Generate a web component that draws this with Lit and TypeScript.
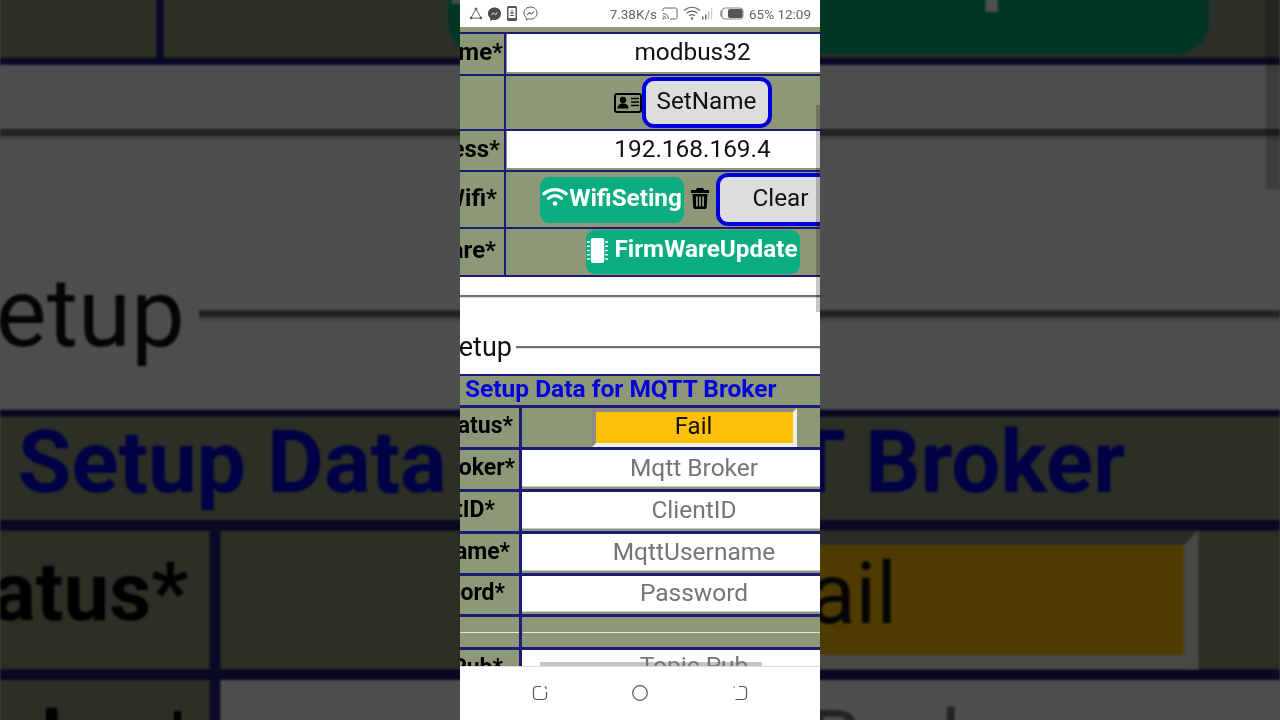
import { LitElement, html, css, svg } from "lit";
import { customElement } from "lit/decorators.js";

const cardIcon = svg`<svg class="card" viewBox="0 0 28 20"><rect x="1" y="1" width="26" height="18" rx="2" fill="none" stroke="#000" stroke-width="2"/><circle cx="9" cy="7" r="3.2"/><path d="M3.5 15.5c0-3.4 2.2-5 5.5-5s5.500 1.600 5.500 5z"/><path d="M17 5.500h8M17 9h8M17 12.500h8" stroke="#000" stroke-width="1.700"/></svg>`;
const wifiIcon = svg`<svg class="wifi" viewBox="0 0 28 20"><g fill="none" stroke="#fff" stroke-width="3.400" stroke-linecap="round"><path d="M2 6.500c7-6 17-6 24 0"/><path d="M7 11.500c4.400-3.600 9.600-3.600 14 0"/></g><circle cx="14" cy="17" r="2.500" fill="#fff"/></svg>`;
const trashIcon = svg`<svg class="trash" viewBox="0 0 18 21"><path d="M6 0h6l1.200 2H18v3H0V2h4.800z"/><path fill-rule="evenodd" d="M1.500 6h15l-.8 13.200c0 1-.8 1.800-1.800 1.800H4.100c-1 0-1.800-.8-1.800-1.800zM5 8.500v10h1.800v-10zM8.100 8.500v10h1.800v-10zM11.200 8.500v10H13v-10z"/></svg>`;
const chipIcon = svg`<svg class="chip" viewBox="0 0 22 26"><rect x="4" y="0" width="14" height="26" rx="2" fill="#fff"/><path d="M0 4h3M0 8.500h3M0 13h3M0 17.500h3M0 22h3M19 4h3M19 8.500h3M19 13h3M19 17.500h3M19 22h3" stroke="#fff" stroke-width="1.500"/></svg>`;

@customElement("app-root")
export class AppRoot extends LitElement {
  static styles = css`
    :host {
      display: block;
      position: relative;
      width: 1280px;
      height: 720px;
      overflow: hidden;
      background: #4e4e4e;
      font-family: Roboto, "Liberation Sans", sans-serif;
    }
    .backdrop {
      position: absolute;
      left: 0;
      top: -824px;
      width: 360px;
      transform: scale(3.5556);
      transform-origin: 0 0;
      filter: brightness(0.306) blur(0.35px);
    }
    .phone {
      position: relative;
      width: 360px;
      height: 720px;
      margin: 0 auto;
      display: flex;
      flex-direction: column;
      background: #fff;
    }
    .status {
      height: 27px;
      flex: none;
      display: flex;
      align-items: center;
      justify-content: space-between;
      padding: 0 9px 0 10px;
      font-size: 13.500px;
      color: #666;
      background: #fff;
      filter: blur(0.3px);
    }
    .status-left, .status-right { display: flex; align-items: center; }
    .status-left { gap: 6px; }
    .status-right { gap: 5px; }
    .status svg { display: block; }
    .viewport {
      position: relative;
      width: 360px;
      height: 639px;
      flex: none;
      overflow: hidden;
      background: #8d9879;
      filter: blur(0.3px);
    }
    .screen-wrap { position: relative; width: 360px; height: 639px; overflow: hidden; background: #8d9879; }
    .top-pad { height: 5px; }
    .row { display: flex; border-top: 2px solid #1e1a78; box-sizing: border-box; }
    .t2 .row { border-top-width: 3px; }
    .h42 { height: 42px; } .h41 { height: 41px; } .h55 { height: 55px; }
    .h57 { height: 57px; } .h48 { height: 48px; } .h33 { height: 33px; }
    .label {
      display: flex;
      justify-content: flex-end;
      align-items: center;
      overflow: hidden;
      white-space: nowrap;
      flex: none;
      font-weight: 700;
      color: #000;
      box-sizing: border-box;
      padding-bottom: 4px;
    }
    .t1 .label { width: 44px; font-size: 24px; }
    .t2 .label { width: 59px; font-size: 23px; padding-bottom: 5px; }
    .t1 .label.pr1 { padding-right: 1px; }
    .t1 .label.pr4 { padding-right: 4px; }
    .t1 .label.pr7 { padding-right: 7px; }
    .t1 .label.pr8 { padding-right: 8px; }
    .t2 .label.pr4 { padding-right: 4px; }
    .t2 .label.pr6 { padding-right: 6px; }
    .t2 .label.pr9 { padding-right: 9px; }
    .t2 .label.pr14 { padding-right: 14px; }
    .t2 .label.pr16 { padding-right: 16px; }
    .t2 .label.pr24 { padding-right: 24px; }
    .value {
      flex: none;
      display: flex;
      align-items: center;
      justify-content: center;
      border-left: 2px solid #1e1a78;
      box-sizing: border-box;
    }
    .t1 .value { width: 375px; }
    .t2 .value { width: 348px; border-left-width: 3px; }
    .field {
      flex: 1;
      align-self: stretch;
      margin: 0 1px 2px;
      background: #fff;
      display: flex;
      align-items: center;
      justify-content: center;
      font-size: 24.400px;
      color: #111;
      position: relative;
    }
    .t1 .field { padding-bottom: 3px; }
    .t2 .field { border-bottom: 1px solid #c8c8c8; color: #757575; font-size: 24.500px; margin-left: 0; padding-bottom: 2px; }
    .card { width: 28px; height: 20px; flex: none; }
    .gray-btn {
      box-sizing: border-box;
      border: 4px solid #0000dd;
      border-radius: 12px;
      background: #dddddf;
      display: flex;
      align-items: center;
      justify-content: center;
      font-size: 24.300px;
      color: #111;
      flex: none;
      padding-bottom: 4px;
    }
    .setname { width: 130px; height: 51px; }
    .clear { width: 129px; height: 53px; }
    .green-btn {
      box-sizing: border-box;
      background: #0bad80;
      border-radius: 9px;
      display: flex;
      align-items: center;
      justify-content: center;
      font-size: 24.300px;
      font-weight: 700;
      color: #fff;
      flex: none;
      padding-bottom: 4px;
    }
    .wifi-btn { width: 144px; height: 46px; gap: 1px; }
    .fw-btn { width: 214px; height: 44px; gap: 6px; padding-bottom: 7px; }
    .wifi { width: 26px; height: 20px; flex: none; margin-bottom: 2px; }
    .chip { width: 21px; height: 25px; flex: none; margin-top: 4px; }
    .trash { width: 18px; height: 21px; flex: none; margin: 0 7px 3px; }
    .section {
      background: #fff;
      height: 97px;
      box-sizing: border-box;
      padding-top: 18px;
    }
    .hr { height: 2px; background: #707070; border-bottom: 1px solid #ddd; }
    .legend { display: flex; align-items: center; height: 40px; margin-top: 29px; }
    .legend-title {
      width: 52px;
      flex: none;
      display: flex;
      justify-content: flex-end;
      overflow: hidden;
      font-size: 27px;
      color: #111;
    }
    .legend-line { flex: 1; margin-left: 4px; height: 2px; background: #707070; border-bottom: 1px solid #ddd; }
    .header {
      height: 31px;
      box-sizing: border-box;
      border-top: 2px solid #1e1a78;
      padding: 0 0 4px 5px;
      display: flex;
      align-items: center;
      font-size: 24.500px;
      font-weight: 700;
      color: #0000e0;
      white-space: nowrap;
    }
    .fail {
      box-sizing: border-box;
      width: 205px;
      height: 39px;
      border-style: solid;
      border-width: 4px;
      border-color: #8c8c84 #f0efe6 #f0efe6 #8c8c84;
      background: #ffc107;
      display: flex;
      align-items: center;
      justify-content: center;
      font-size: 24px;
      color: #111;
      padding: 0 2px 3px 0;
    }
    .rule { height: 1px; flex: 1; background: #e6e8dc; margin-left: 1px; }
    .label.plain { padding: 0; }
    .label .rule { margin: 0; }
    .hbar {
      position: absolute;
      left: 18px;
      top: 12px;
      width: 222px;
      height: 6px;
      background: #c4c4c4;
    }
    .field .topic { position: relative; padding-bottom: 3px; }
    .scrollbar {
      position: absolute;
      right: 0;
      top: 78px;
      width: 4px;
      height: 207px;
      background: rgba(0, 0, 0, 0.22);
    }
    .nav {
      flex: 1;
      display: grid;
      grid-template-columns: repeat(3, 100px);
      justify-content: center;
      align-items: center;
      border-top: 1px solid #ddd;
      background: #fff;
      filter: blur(0.3px);
      padding-bottom: 2px;
    }
    .nav svg { width: 18px; height: 18px; justify-self: center; }
  `;

  private screen() {
    return html`<div class="screen-wrap">
      <div class="top-pad"></div>
      <div class="t1">
        <div class="row h42">
          <div class="label pr1">Name*</div>
          <div class="value"><div class="field">modbus32</div></div>
        </div>
        <div class="row h55">
          <div class="label"></div>
          <div class="value">${cardIcon}<div class="gray-btn setname">SetName</div></div>
        </div>
        <div class="row h41">
          <div class="label pr4">Address*</div>
          <div class="value"><div class="field">192.168.169.4</div></div>
        </div>
        <div class="row h57">
          <div class="label pr7">Wifi*</div>
          <div class="value">
            <div class="green-btn wifi-btn">${wifiIcon}WifiSeting</div>
            ${trashIcon}
            <div class="gray-btn clear">Clear</div>
          </div>
        </div>
        <div class="row h48">
          <div class="label pr8">Firmware*</div>
          <div class="value"><div class="green-btn fw-btn">${chipIcon}FirmWareUpdate</div></div>
        </div>
      </div>
      <div class="row"></div>
      <div class="section">
        <div class="hr"></div>
        <div class="legend">
          <div class="legend-title">Setup</div>
          <div class="legend-line"></div>
        </div>
      </div>
      <div class="header">Setup Data for MQTT Broker</div>
      <div class="t2">
        <div class="row h42">
          <div class="label pr6">Status*</div>
          <div class="value"><div class="fail">Fail</div></div>
        </div>
        <div class="row h42">
          <div class="label pr4">Broker*</div>
          <div class="value"><div class="field">Mqtt Broker</div></div>
        </div>
        <div class="row h42">
          <div class="label pr24">ClientID*</div>
          <div class="value"><div class="field">ClientID</div></div>
        </div>
        <div class="row h42">
          <div class="label pr9">Username*</div>
          <div class="value"><div class="field">MqttUsername</div></div>
        </div>
        <div class="row h41">
          <div class="label pr14">Password*</div>
          <div class="value"><div class="field">Password</div></div>
        </div>
        <div class="row h33">
          <div class="label plain"><div class="rule"></div></div>
          <div class="value"><div class="rule"></div></div>
        </div>
        <div class="row h42">
          <div class="label pr16">Topic Pub*</div>
          <div class="value"><div class="field"><div class="hbar"></div><span class="topic">Topic Pub</span></div></div>
        </div>
      </div>
      <div class="scrollbar"></div>
    </div>`;
  }

  render() {
    return html`
      <div class="backdrop">${this.screen()}</div>
      <div class="phone">
        <div class="status">
          <div class="status-left">
            <svg width="12" height="13" viewBox="0 0 13 13" fill="none" stroke="#555" stroke-width="1"><path d="M6.500 1.500 12 11.500H1z"/><circle cx="6.500" cy="1.500" r="1" fill="#555"/><circle cx="1" cy="11.500" r="1" fill="#555"/><circle cx="12" cy="11.500" r="1" fill="#555"/></svg>
            <svg width="13" height="14" viewBox="0 0 13 14"><path d="M6.500.5C3 .5 0 3 0 6.500c0 2 1 3.700 2.300 4.800V14l2.400-1.300c.6.200 1.200.3 1.800.3 3.500 0 6.500-2.700 6.500-6.500S10 .5 6.500.5z" fill="#4a4a4a"/><path d="M2.800 8.500l2.500-3 2 1.500 2.900-2.500-2.300 3.500-2-1.500z" fill="#fff"/></svg>
            <svg width="10" height="15" viewBox="0 0 10 15"><rect width="10" height="15" rx="1.500" fill="#555"/><rect x="1.500" y="2" width="7" height="10" fill="#fff"/><path d="M5 3.500v4M3.200 6 5 8l1.800-2M3 9.500h4" stroke="#555" stroke-width="1" fill="none"/></svg>
            <svg width="15" height="15" viewBox="0 0 15 15" fill="none" stroke="#555" stroke-width="1"><path d="M7.500 1C3.800 1 1 3.700 1 7c0 1.900.9 3.500 2.300 4.600V14l2.200-1.200c.6.200 1.300.3 2 .3 3.700 0 6.500-2.700 6.500-6.100S11.200 1 7.500 1z"/><path d="M3.800 9l2.600-3 2 1.500 2.800-2.500-2.500 3.300-2-1.400z" fill="#555" stroke-width=".5"/></svg>
          </div>
          <div class="status-right">
            <span>7.38K/s</span>
            <svg width="16" height="13" viewBox="0 0 16 13" fill="none" stroke="#666" stroke-width="1"><path d="M1 4V2.500C1 1.700 1.700 1 2.500 1h11c.8 0 1.500.7 1.500 1.500v8c0 .8-.7 1.500-1.500 1.500H8"/><path d="M1 6.500c3 0 5.500 2.500 5.500 5.500M1 9c1.700 0 3 1.300 3 3"/><circle cx="1.500" cy="11.500" r="1" fill="#666" stroke="none"/></svg>
            <svg width="30" height="15" viewBox="0 0 30 15" fill="none" stroke="#666" stroke-width="1.100"><path d="M1 4.500c5-4 11-4 16 0M3.500 7.200c3.500-2.700 7.500-2.700 11 0M6 9.800c2-1.500 4-1.500 6 0"/><circle cx="9" cy="12.500" r="1.200" fill="#666" stroke="none"/><rect x="19" y="10.500" width="1.500" height="3" fill="#666" stroke="none"/><rect x="22" y="8.500" width="1.500" height="5" fill="#666" stroke="none"/><rect x="25" y="5" width="1.200" height="8.500" fill="#bbb" stroke="none"/><rect x="28" y="2" width="1.200" height="11.500" fill="#ccc" stroke="none"/></svg>
            <svg width="26" height="13" viewBox="0 0 26 13"><path d="M3 3.500V9.500" stroke="#888" stroke-width="1.500"/><rect x="4" y="1" width="21" height="11" rx="3" fill="#fff" stroke="#888" stroke-width="1"/><rect x="10" y="2" width="14.500" height="9" rx="2" fill="#555"/></svg>
            <span>65% 12:09</span>
          </div>
        </div>
        <div class="viewport">${this.screen()}</div>
        <div class="nav">
          <svg viewBox="0 0 18 18" fill="none" stroke="#555" stroke-width="1.200"><path d="M10 2.500H6C3.800 2.500 2.500 3.800 2.500 6v6c0 2.200 1.300 3.500 3.500 3.500h6c2.200 0 3.500-1.300 3.500-3.500V8"/><path d="M13.500 3h1.500v2"/></svg>
          <svg viewBox="0 0 18 18" fill="none" stroke="#555" stroke-width="1.200"><circle cx="9" cy="9" r="7.300"/></svg>
          <svg viewBox="0 0 18 18" fill="none" stroke="#555" stroke-width="1.200"><path d="M8 2.500h4c2.200 0 3.500 1.300 3.500 3.500v6c0 2.200-1.300 3.500-3.500 3.500H4.500"/><path d="M2.500 3h1.500M2.500 15.500h0"/></svg>
        </div>
      </div>
    `;
  }
}
